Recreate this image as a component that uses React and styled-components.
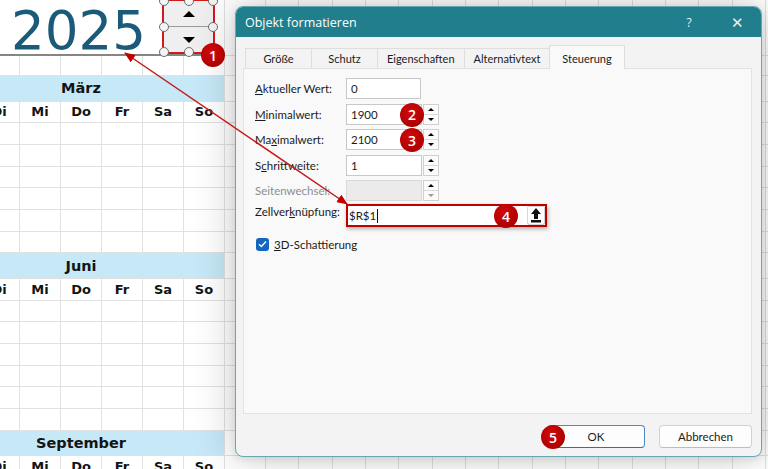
import React from 'react';
import styled, { createGlobalStyle } from 'styled-components';

const GlobalStyle = createGlobalStyle`
  html, body {
    margin: 0;
    padding: 0;
    background: #fff;
  }
  body {
    width: 768px;
    height: 469px;
    overflow: hidden;
    font-family: "Open Sans", "Noto Sans", sans-serif;
  }
`;

const MONTHS = ['März', 'Juni', 'September'];
const DAYS = ['Mo', 'Di', 'Mi', 'Do', 'Fr', 'Sa', 'So'];
const COLS = 24;
const RED = '#c00000';

const MONTH_BLOCK = '25.5px ' + Array(7).fill('21.7px').join(' ');
const SHEET_ROWS = `56px 20px ${MONTH_BLOCK} ${MONTH_BLOCK} ${MONTH_BLOCK}`;

const Screen = styled.div`
  position: relative;
  width: 768px;
  height: 469px;
  overflow: hidden;
  background: #fff;
`;

// --- spreadsheet ---

const Sheet = styled.div`
  display: grid;
  margin-left: -62px;
  grid-template-columns: repeat(8, 41px) repeat(16, 33.34px);
  grid-template-rows: ${SHEET_ROWS};
`;

const Cell = styled.div`
  box-sizing: border-box;
  border-right: 1px solid #e1e1e1;
  border-bottom: 1px solid #e1e1e1;
`;

const TitleCell = styled(Cell)`
  grid-column: span 7;
  border-bottom: 2px solid #858585;
  padding: 4px 0 0 73px;
  font-family: "DejaVu Sans", sans-serif;
  font-size: 53px;
  line-height: 1;
  color: #1b5a79;
  white-space: nowrap;
`;

const MonthBand = styled(Cell)`
  grid-column: span 7;
  background: #c6e8f7;
  display: flex;
  align-items: center;
  justify-content: center;
  font-family: "DejaVu Sans", sans-serif;
  font-weight: 700;
  font-size: 14.5px;
  color: #141414;
`;

const DayCell = styled(Cell)`
  display: flex;
  align-items: center;
  justify-content: center;
  font-family: "DejaVu Sans", sans-serif;
  font-weight: 700;
  font-size: 13px;
  color: #141414;
`;

const fillers = (n, key) =>
  Array.from({ length: n }, (_, i) => <Cell key={`${key}-${i}`} />);

const SheetRows = () => {
  const rows = [];
  rows.push(<TitleCell key="title">2025</TitleCell>, ...fillers(COLS - 7, 'tf'));
  rows.push(...fillers(COLS, 'blank0'));
  MONTHS.forEach((month) => {
    rows.push(<MonthBand key={month}>{month}</MonthBand>, ...fillers(COLS - 7, `${month}-b`));
    rows.push(
      ...DAYS.map((d) => <DayCell key={`${month}-${d}`}>{d}</DayCell>),
      ...fillers(COLS - 7, `${month}-d`),
    );
    for (let r = 0; r < 6; r++) rows.push(...fillers(COLS, `${month}-r${r}`));
  });
  return <Sheet>{rows}</Sheet>;
};

// --- form control (spin button on the sheet) ---

const SpinControl = styled.div`
  position: absolute;
  left: 162px;
  top: -1px;
  width: 53px;
  height: 55px;
  box-sizing: border-box;
  border: 2px solid #d21a1a;
  background: #efefef;
  display: flex;
  flex-direction: column;
`;

const SpinControlHalf = styled.div`
  flex: 1;
  display: flex;
  align-items: center;
  justify-content: center;

  & + & {
    border-top: 1px solid #9b9b9b;
  }
`;

const Triangle = styled.span`
  width: 0;
  height: 0;
  border-left: ${(p) => p.$size}px solid transparent;
  border-right: ${(p) => p.$size}px solid transparent;
  ${(p) =>
    p.$down
      ? `border-top: ${p.$size}px solid ${p.$color || '#000'};`
      : `border-bottom: ${p.$size}px solid ${p.$color || '#000'};`}
`;

const Handle = styled.span`
  position: absolute;
  left: calc(${(p) => p.$x}% - 5px);
  top: calc(${(p) => p.$y}% - 5px);
  width: 8px;
  height: 8px;
  border-radius: 50%;
  border: 1px solid #6e6e6e;
  background: #f4f4f4;
`;

const HANDLES = [
  [0, 0], [50, 0], [100, 0],
  [0, 50], [100, 50],
  [0, 100], [50, 100], [100, 100],
];

// --- badges ---

const Badge = styled.span`
  position: absolute;
  left: ${(p) => p.$x}px;
  top: ${(p) => p.$y}px;
  z-index: 4;
  width: 24px;
  height: 24px;
  border-radius: 50%;
  background: radial-gradient(circle at 40% 35%, #d10a0a, #ad0000 70%);
  color: #fff;
  font-family: "Open Sans", sans-serif;
  font-size: 14px;
  font-weight: 600;
  display: flex;
  align-items: center;
  justify-content: center;
`;

// --- dialog ---

const Dialog = styled.section`
  position: absolute;
  left: 235px;
  top: 6px;
  width: 527px;
  height: 451px;
  box-sizing: border-box;
  border: 1px solid #6aa6b1;
  border-radius: 8px;
  background: #f3f3f3;
  overflow: hidden;
  display: flex;
  flex-direction: column;
  font-family: Lato, "Open Sans", sans-serif;
  font-size: 11.5px;
  color: #1b1b1b;
  box-shadow: 0 0 44px rgba(0, 0, 0, 0.22), 0 2px 8px rgba(0, 0, 0, 0.1);
`;

const TitleBar = styled.header`
  flex-shrink: 0;
  height: 30px;
  background: #217e8d;
  color: #fff;
  display: flex;
  align-items: center;
  padding-left: 9px;
  font-family: "Open Sans", sans-serif;
`;

const Title = styled.h1`
  flex: 1;
  margin: 0;
  font-size: 12.5px;
  font-weight: 400;
`;

const TitleButtons = styled.div`
  display: flex;
  gap: 2px;
  margin-right: 1px;
`;

const TitleButton = styled.span`
  width: 46px;
  height: 30px;
  display: flex;
  align-items: center;
  justify-content: center;
  font-size: ${(p) => (p.$large ? 15 : 12)}px;
  color: #e8f2f4;
`;

const Body = styled.div`
  flex: 1;
  display: flex;
  flex-direction: column;
  padding: 8px 9px 8px 7px;
`;

const Tabs = styled.div`
  display: flex;
  align-items: flex-end;
  height: 23px;
  padding-left: 3px;
  position: relative;
  z-index: 1;
`;

const Tab = styled.div`
  box-sizing: border-box;
  height: ${(p) => (p.$active ? 24 : 20)}px;
  margin-bottom: ${(p) => (p.$active ? -1 : 0)}px;
  margin-left: -1px;
  min-width: 67px;
  padding: ${(p) => (p.$active ? '2px 12px 0' : '0 9px')};
  display: flex;
  align-items: center;
  justify-content: center;
  border: 1px solid #dedede;
  border-bottom: none;
  background: ${(p) => (p.$active ? '#f9f9f9' : '#f3f3f3')};
  font-size: 11px;
  white-space: nowrap;
`;

const Panel = styled.div`
  height: 346px;
  box-sizing: border-box;
  background: #f9f9f9;
  border: 1px solid #e2e2e2;
  padding: 9px 11px;
  display: flex;
  flex-direction: column;
  gap: 4.5px;
`;

const FormRow = styled.div`
  display: flex;
  align-items: ${(p) => (p.$top ? 'flex-start' : 'center')};
  height: ${(p) => p.$h || 21}px;
  margin-top: ${(p) => p.$mt || 0}px;
`;

const Label = styled.span`
  width: 91px;
  flex-shrink: 0;
  line-height: 15px;
  color: ${(p) => (p.$disabled ? '#8d8d8d' : '#1b1b1b')};
  white-space: nowrap;
`;

const Field = styled.div`
  position: relative;
  width: ${(p) => p.$w}px;
  height: 21px;
  box-sizing: border-box;
  border: 1px solid ${(p) => (p.$disabled ? '#d9d9d9' : '#c8c8c8')};
  background: ${(p) => (p.$disabled ? '#ebebeb' : '#fff')};
  padding-left: 4px;
  display: flex;
  align-items: center;
`;

const Spinner = styled.div`
  width: 16px;
  height: 21px;
  margin-left: 1px;
  box-sizing: border-box;
  border: 1px solid #d0d0d0;
  background: #fbfbfb;
  display: flex;
  flex-direction: column;
`;

const SpinHalf = styled.div`
  flex: 1;
  display: flex;
  align-items: center;
  justify-content: center;

  & + & {
    border-top: 1px solid #dadada;
  }
`;

const LinkBox = styled.div`
  position: relative;
  width: 201px;
  height: 23px;
  box-sizing: border-box;
  border: 2px solid ${RED};
  background: #fff;
  display: flex;
  box-shadow: 1px 2px 4px rgba(0, 0, 0, 0.3);
`;

const LinkText = styled.div`
  flex: 1;
  display: flex;
  align-items: center;
  padding-left: 1px;
`;

const Caret = styled.span`
  width: 1px;
  height: 14px;
  margin-left: 1px;
  background: #111;
`;

const PickButton = styled.div`
  width: 18px;
  box-sizing: border-box;
  border: 1px solid #d6d6d6;
  border-radius: 2px;
  background: #fff;
  display: flex;
  align-items: center;
  justify-content: center;
`;

const CheckRow = styled.label`
  display: flex;
  align-items: center;
  gap: 5px;
  margin-top: 6px;
  padding-left: 1px;
`;

const CheckBox = styled.span`
  width: 13px;
  height: 13px;
  border-radius: 3px;
  background: #1266c0;
  display: flex;
  align-items: center;
  justify-content: center;
`;

const Footer = styled.div`
  display: flex;
  justify-content: flex-end;
  gap: 14px;
  margin-top: 11px;
`;

const Button = styled.div`
  position: relative;
  width: ${(p) => p.$w}px;
  height: 23px;
  box-sizing: border-box;
  border: 1px solid ${(p) => (p.$primary ? '#4a88c6' : '#d2d2d2')};
  border-bottom-color: ${(p) => (p.$primary ? '#2f6fb0' : '#bdbdbd')};
  border-radius: 4px;
  background: #fdfdfd;
  display: flex;
  align-items: center;
  justify-content: center;
`;

const ArrowLayer = styled.svg`
  position: absolute;
  left: 0;
  top: 0;
  width: 768px;
  height: 469px;
  pointer-events: none;
  z-index: 5;
`;

const SpinField = ({ label, value, disabled, badge }) => (
  <FormRow>
    <Label $disabled={disabled}>{label}</Label>
    <Field $w={76} $disabled={disabled}>
      {value}
      {badge && <Badge $x={53} $y={-2}>{badge}</Badge>}
    </Field>
    <Spinner>
      <SpinHalf><Triangle $size={3} /></SpinHalf>
      <SpinHalf><Triangle $size={3} $down $color={disabled ? '#9a9a9a' : '#000'} /></SpinHalf>
    </Spinner>
  </FormRow>
);

const TABS = ['Größe', 'Schutz', 'Eigenschaften', 'Alternativtext', 'Steuerung'];

export default function App() {
  return (
    <Screen>
      <GlobalStyle />
      <SheetRows />

      <SpinControl>
        <SpinControlHalf><Triangle $size={6} /></SpinControlHalf>
        <SpinControlHalf><Triangle $size={6} $down /></SpinControlHalf>
        {HANDLES.map(([x, y]) => (
          <Handle key={`${x}-${y}`} $x={x} $y={y} />
        ))}
        <Badge $x={37} $y={42}>1</Badge>
      </SpinControl>

      <Dialog>
        <TitleBar>
          <Title>Objekt formatieren</Title>
          <TitleButtons>
            <TitleButton>?</TitleButton>
            <TitleButton $large>✕</TitleButton>
          </TitleButtons>
        </TitleBar>
        <Body>
          <Tabs>
            {TABS.map((t) => (
              <Tab key={t} $active={t === 'Steuerung'}>{t}</Tab>
            ))}
          </Tabs>
          <Panel>
            <FormRow>
              <Label><u>A</u>ktueller Wert:</Label>
              <Field $w={75}>0</Field>
            </FormRow>
            <SpinField label={<><u>M</u>inimalwert:</>} value="1900" badge="2" />
            <SpinField label={<>Ma<u>x</u>imalwert:</>} value="2100" badge="3" />
            <SpinField label={<>S<u>c</u>hrittweite:</>} value="1" />
            <SpinField label="Seitenwechsel:" disabled />
            <FormRow $top $h={23} $mt={-1.5}>
              <Label>Zellver<u>k</u>nüpfung:</Label>
              <LinkBox>
                <LinkText>$R$1<Caret /></LinkText>
                <PickButton>
                  <svg width="10" height="15" viewBox="0 0 10 15">
                    <path d="M5 0 L10 6 H7 V11 H3 V6 H0 Z" fill="#111" />
                    <rect x="0" y="12" width="10" height="2.5" fill="#111" />
                  </svg>
                </PickButton>
                <Badge $x={146} $y={-2}>4</Badge>
              </LinkBox>
            </FormRow>
            <CheckRow>
              <CheckBox>
                <svg width="9" height="8" viewBox="0 0 9 8">
                  <path d="M1 4.2 L3.4 6.5 L8 1.5" stroke="#fff" strokeWidth="1.4" fill="none" />
                </svg>
              </CheckBox>
              <span><u>3</u>D-Schattierung</span>
            </CheckRow>
          </Panel>
          <Footer>
            <Button $w={98} $primary>
              OK
              <Badge $x={-7} $y={-1}>5</Badge>
            </Button>
            <Button $w={93}>Abbrechen</Button>
          </Footer>
        </Body>
      </Dialog>

      <ArrowLayer viewBox="0 0 768 469">
        <defs>
          <marker
            id="head"
            markerUnits="userSpaceOnUse"
            markerWidth="11"
            markerHeight="9"
            refX="10"
            refY="4.5"
            orient="auto-start-reverse"
          >
            <path d="M0 0 L11 4.5 L0 9 Z" fill="#c00000" />
          </marker>
        </defs>
        <line
          x1="125"
          y1="53"
          x2="347"
          y2="204"
          stroke="#c41a1a"
          strokeWidth="1.5"
          markerStart="url(#head)"
          markerEnd="url(#head)"
        />
      </ArrowLayer>
    </Screen>
  );
}
